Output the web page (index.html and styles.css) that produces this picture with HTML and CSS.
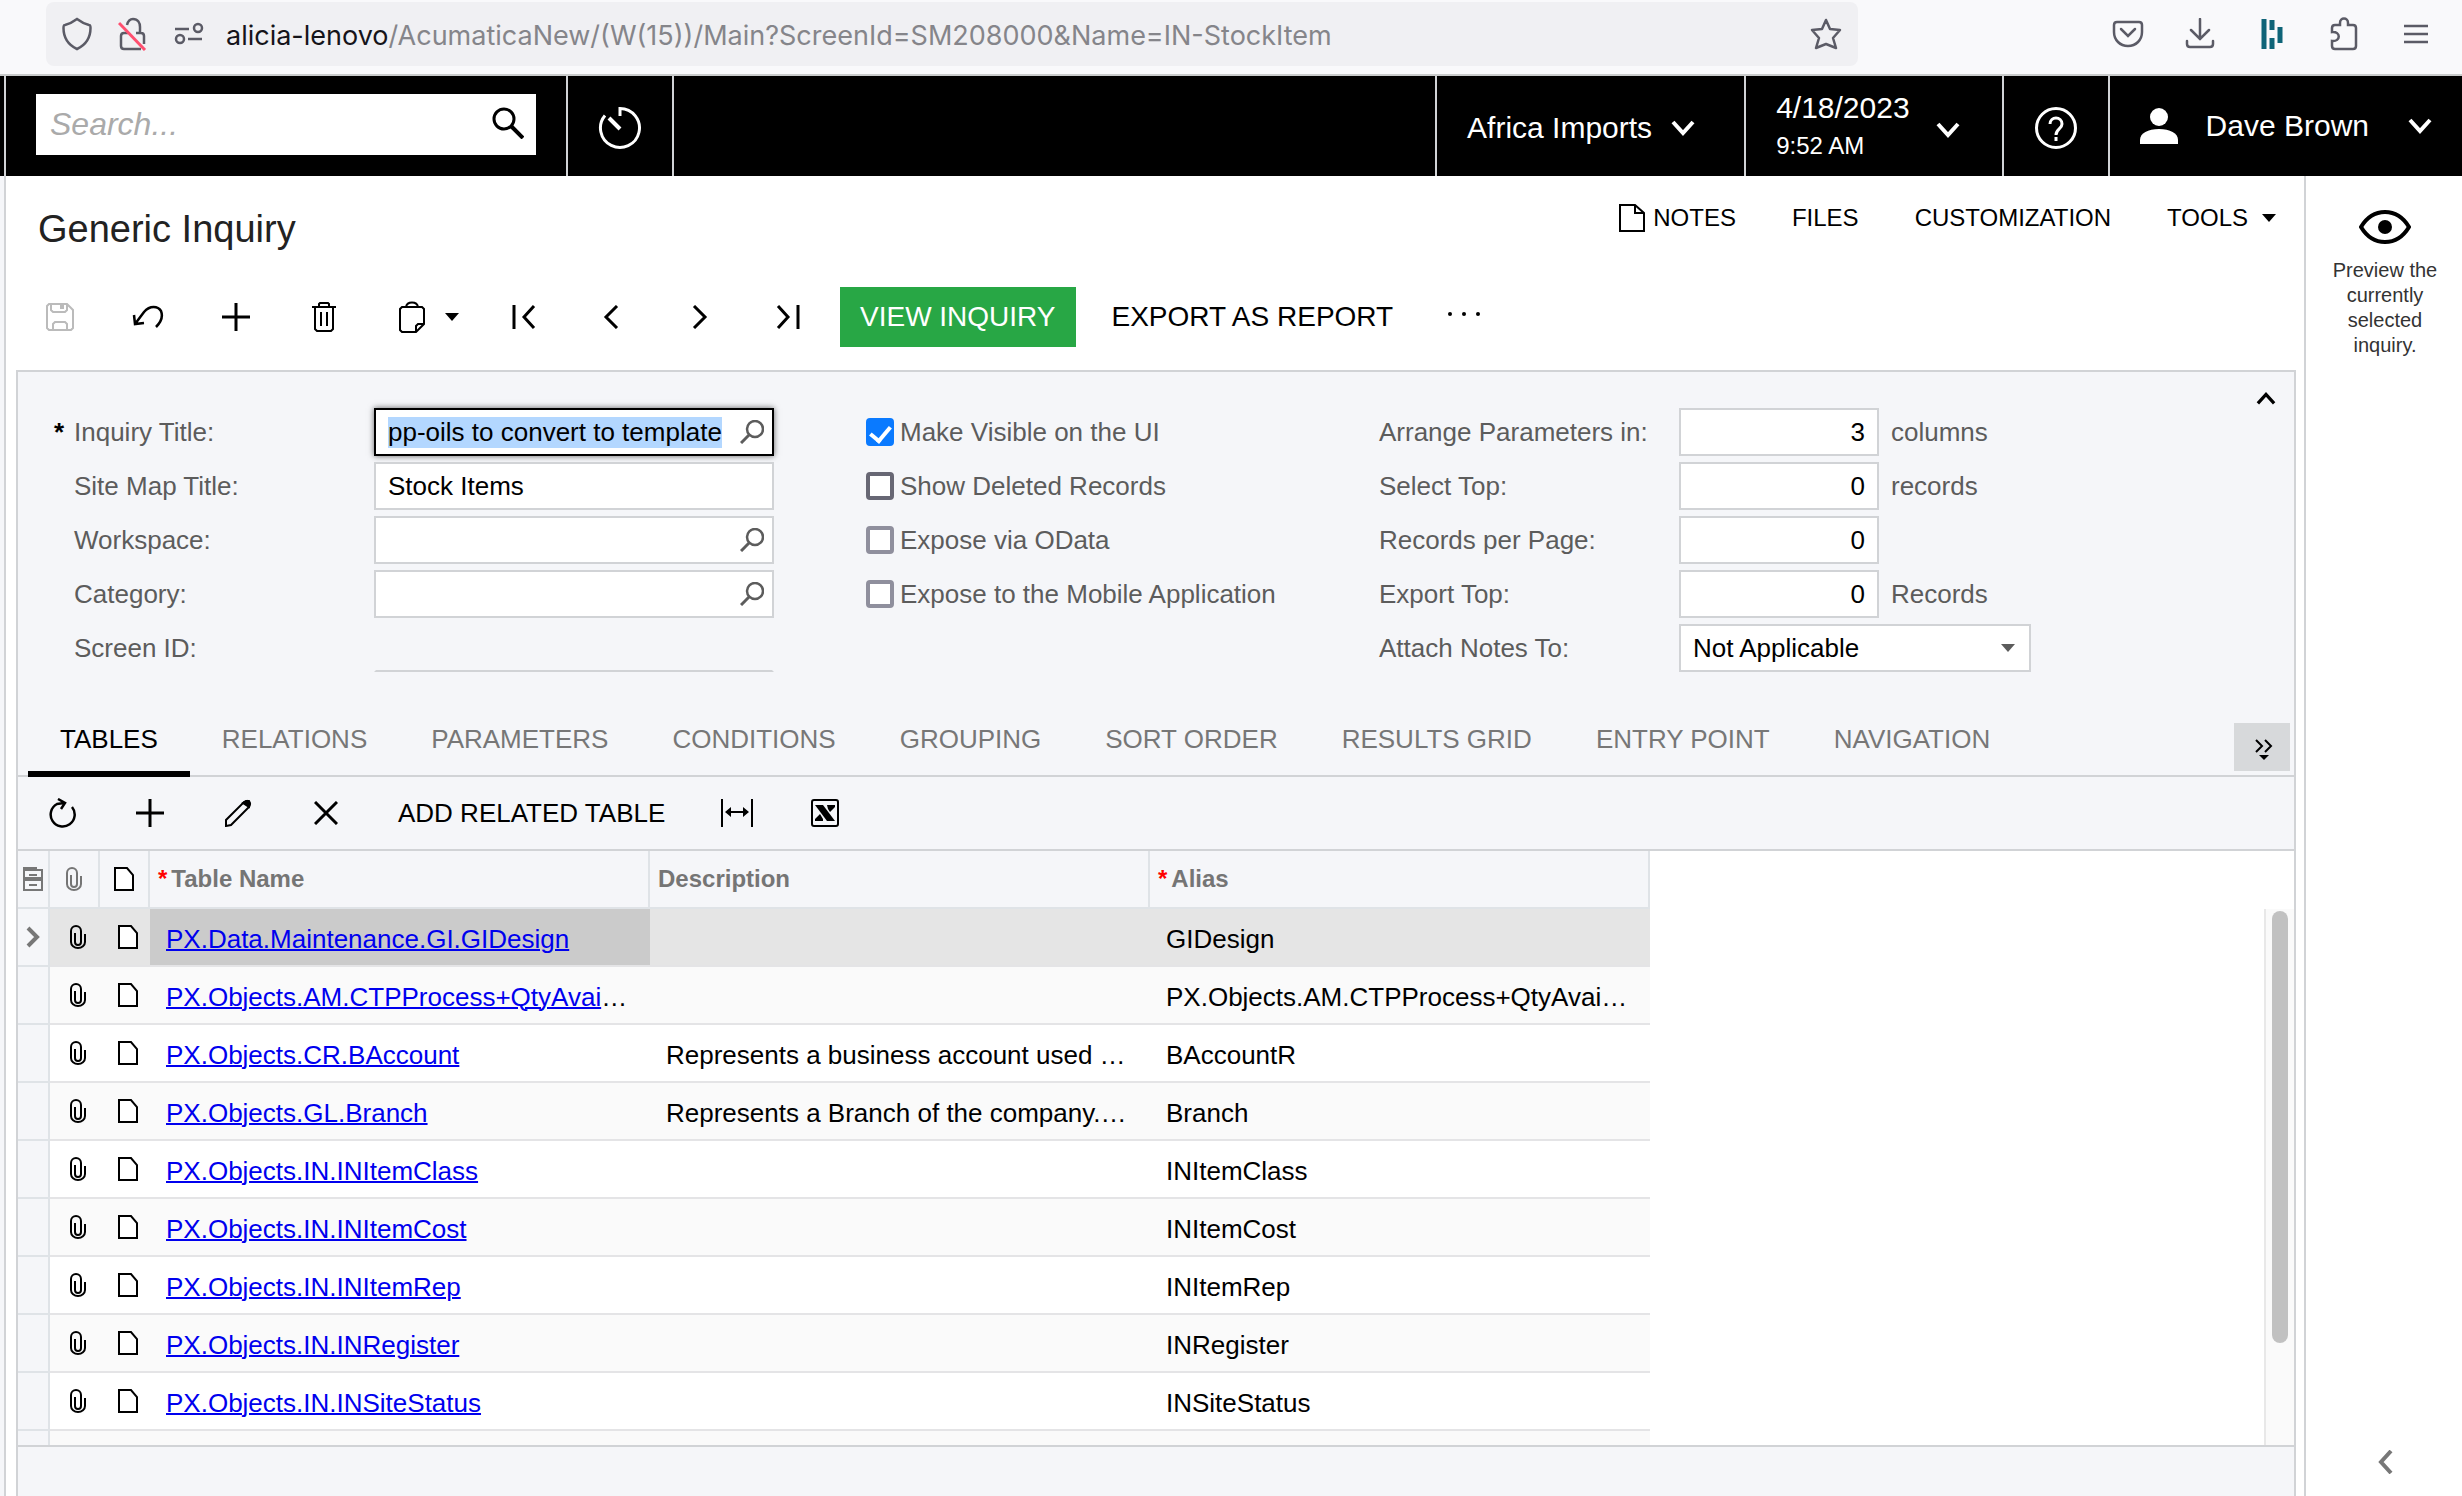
FILE: index.html
```html
<!DOCTYPE html>
<html lang="en">
  <head>
    <meta charset="UTF-8" />
    <meta name="viewport" content="width=device-width, initial-scale=1.0" />
    <title>Generic Inquiry</title>
    <link rel="stylesheet" href="styles.css">
  </head>
  <body>
    <!-- shared icons -->
    <svg class="defs" width="0" height="0">
      <symbol id="chevron" viewBox="0 0 24 16"><path d="M2 2l10 11L22 2" fill="none" stroke="currentColor" stroke-width="4" /></symbol>
      <symbol id="chevron-up" viewBox="0 0 24 16"><path d="M2 14L12 3l10 11" fill="none" stroke="currentColor" stroke-width="4" /></symbol>
      <symbol id="caret" viewBox="0 0 14 8"><path d="M0 0h14L7 8z" fill="currentColor" /></symbol>
      <symbol id="plus" viewBox="0 0 28 28"><path d="M14 0v28M0 14h28" stroke="currentColor" stroke-width="3" /></symbol>
      <symbol id="lookup" viewBox="0 0 24 24"><circle cx="15" cy="9" r="8" fill="none" stroke="currentColor" stroke-width="2.500" /><path d="M9 15l-8 8" stroke="currentColor" stroke-width="3" /></symbol>
      <symbol id="clip" viewBox="0 0 18 24"><path d="M6 8v9a3 3 0 0 0 6 0V6a5 5 0 0 0-10 0v11a7 6 0 0 0 14 0V9" fill="none" stroke="currentColor" stroke-width="2" /></symbol>
      <symbol id="page" viewBox="0 0 20 24"><path d="M1 1h12l6 7v15H1z" fill="#fff" stroke="currentColor" stroke-width="2" /></symbol>
    </svg>

    <div class="browser">
      <div class="urlbar">
        <svg width="30" height="34" viewBox="0 0 30 34" fill="none" stroke="#5b5b66" stroke-width="2.500"><path d="M15 2c4 3 8 5 12 6 1.500 0 1.500 1 1.500 3 0 10-5 17-13.500 21C6.500 28 1.500 21 1.500 11c0-2 0-3 1.500-3 4-1 8-3 12-6z" /></svg>
        <svg width="30" height="34" viewBox="0 0 30 34" fill="none" stroke="#5b5b66" stroke-width="2.500"><path d="M9 8c1-4 3-6 6-6 5 0 7 4 7 8v6M10 16H6c-2 0-3 1-3 3v10c0 2 1 3 3 3h17M18 16h5c2 0 3 1 3 3v8" /><path d="M1 6l26 27" stroke="#ff4f6f" stroke-width="3" /></svg>
        <svg width="30" height="34" viewBox="0 0 30 34" fill="none" stroke="#5b5b66" stroke-width="2.500"><path d="M1 12h14M14 22h14" /><circle cx="24" cy="11" r="4" /><circle cx="6" cy="22" r="4" /></svg>
        <div class="url"><span class="host">alicia-lenovo</span>/AcumaticaNew/(W(15))/Main?ScreenId=SM208000&amp;Name=IN-StockItem</div>
        <svg width="32" height="32" viewBox="0 0 32 32" fill="none" stroke="#5b5b66" stroke-width="2.500" stroke-linejoin="round"><path d="M16 2l4 9 10 1-7 8 3 10-10-4-10 4 3-10-7-8 10-1z" /></svg>
      </div>
      <div class="browser-tools">
        <svg width="32" height="32" viewBox="0 0 32 32" fill="none" stroke="#5b5b66" stroke-width="2.500" stroke-linecap="round"><path d="M5 4h22c2 0 3 1 3 3v7c0 8-6 14-14 14S2 22 2 14V7c0-2 1-3 3-3z" /><path d="M9 11l7 7 7-7" /></svg>
        <svg width="32" height="32" viewBox="0 0 32 32" fill="none" stroke="#5b5b66" stroke-width="2.500" stroke-linecap="round"><path d="M16 1v20M7 12l9 9 9-9M3 23v3c0 2 1 3 3 3h20c2 0 3-1 3-3v-3" /></svg>
        <svg width="32" height="32" viewBox="0 0 32 32" fill="none" stroke="#0f6478" stroke-width="5"><path d="M8 1v30M16 2v10M16 20v11M24 9v16" /></svg>
        <svg width="32" height="34" viewBox="0 0 32 34" fill="none" stroke="#5b5b66" stroke-width="2.500"><path d="M4 15v-4c0-2 1-3 3-3h5V6c0-6 8-6 8 0v2h5c2 0 3 1 3 3v18c0 2-1 3-3 3H7c-2 0-3-1-3-3v-5c9 1 9-10 0-9z" /></svg>
        <svg width="32" height="32" viewBox="0 0 32 32" stroke="#5b5b66" stroke-width="2.500"><path d="M4 8h24M4 16h24M4 24h24" /></svg>
      </div>
    </div>

    <header class="topbar">
      <div class="search-cell">
        <label class="search">
          <input type="text" placeholder="Search..." aria-label="Search">
          <svg width="32" height="32" viewBox="0 0 32 32" fill="none" stroke="#000"><circle cx="12" cy="12" r="10" stroke-width="3" /><path d="M19 19l12 12" stroke-width="4" /></svg>
        </label>
      </div>
      <button class="icon-cell recent" aria-label="Recent">
        <svg width="44" height="44" viewBox="0 0 44 44" fill="none" stroke="#fff" stroke-width="3"><path d="M22 10V2.500A19.500 19.500 0 1 1 7 9.500" /><path d="M11 12l11 11" stroke-width="4" /></svg>
      </button>
      <button class="cell company">Africa Imports <svg width="24" height="16"><use href="#chevron" /></svg></button>
      <button class="cell date"><span>4/18/2023<small>9:52 AM</small></span> <svg width="24" height="16"><use href="#chevron" /></svg></button>
      <button class="icon-cell help" aria-label="Help">
        <svg width="44" height="44" viewBox="0 0 44 44" fill="none" stroke="#fff" stroke-width="3"><circle cx="22" cy="22" r="19.500" /><path d="M16 18c0-8 12-8 12 0 0 5-6 5-6 11M22 31v4" /></svg>
      </button>
      <button class="cell user">
        <svg width="38" height="36" viewBox="0 0 38 36" fill="#fff"><ellipse cx="19" cy="9" rx="9" ry="9" /><path d="M0 36v-4c0-7 8-11 19-11s19 4 19 11v4z" /></svg>
        <span>Dave Brown</span>
        <svg width="24" height="16"><use href="#chevron" /></svg>
      </button>
    </header>

    <div class="page">
      <main class="content">
        <div class="heading">
          <h1>Generic Inquiry</h1>
          <div class="links">
            <button class="notes"><svg width="26" height="28" viewBox="0 0 26 28" fill="none" stroke="#000" stroke-width="2"><path d="M1 1h15l9 8v18H1zM16 1v8h9" /></svg>NOTES</button>
            <button>FILES</button>
            <button>CUSTOMIZATION</button>
            <button class="tools">TOOLS <svg width="14" height="8"><use href="#caret" /></svg></button>
          </div>
        </div>

        <div class="toolbar">
          <button class="tool" disabled aria-label="Save"><svg width="28" height="28" viewBox="0 0 28 28" fill="none" stroke="#bbb" stroke-width="2"><path d="M3 1h18l6 6v18l-2 2H3l-2-2V3zM5 1v6l2 2h12l2-2V1M7 27v-6l2-2h10l2 2v6" /><path d="M16 2v4" stroke-width="4" /></svg></button>
          <button class="tool" aria-label="Undo"><svg width="32" height="24" viewBox="0 0 32 24" fill="none" stroke="#000" stroke-width="2.500"><path d="M2 10l1 9 9-1M3 19L12 7c6-7 14-6 17-1 2 5 0 11-5 16" /></svg></button>
          <button class="tool" aria-label="Add"><svg width="28" height="28"><use href="#plus" /></svg></button>
          <button class="tool" aria-label="Delete"><svg width="24" height="30" viewBox="0 0 24 30" fill="none" stroke="#000" stroke-width="2"><path d="M0 5h24M7 5V2l1-1h8l1 1v3M3 5v22l2 2h14l2-2V5M9 10v14M15 10v14" /></svg></button>
          <button class="tool paste" aria-label="Clipboard"><svg width="26" height="32" viewBox="0 0 26 32" fill="none" stroke="#000" stroke-width="2"><path d="M3 6h20l2 2v15l-8 8H3l-2-2V8zM7 6c1-6 11-6 12 0M17 31v-6l2-2h6" /></svg><svg width="14" height="8"><use href="#caret" /></svg></button>
          <button class="tool" aria-label="First"><svg width="24" height="24" viewBox="0 0 24 24" fill="none" stroke="#000" stroke-width="3"><path d="M2 0v24M22 1L12 12l10 11" /></svg></button>
          <button class="tool" aria-label="Previous"><svg width="24" height="24" viewBox="0 0 24 24" fill="none" stroke="#000" stroke-width="3"><path d="M17 1L6 12l11 11" /></svg></button>
          <button class="tool" aria-label="Next"><svg width="24" height="24" viewBox="0 0 24 24" fill="none" stroke="#000" stroke-width="3"><path d="M6 1l11 11L6 23" /></svg></button>
          <button class="tool" aria-label="Last"><svg width="24" height="24" viewBox="0 0 24 24" fill="none" stroke="#000" stroke-width="3"><path d="M22 0v24M2 1l10 11L2 23" /></svg></button>
          <button class="view">VIEW INQUIRY</button>
          <button class="export">EXPORT AS REPORT</button>
          <button class="more" aria-label="More"><svg width="34" height="6" viewBox="0 0 34 6"><circle cx="3" cy="3" r="2" /><circle cx="17" cy="3" r="2" /><circle cx="31" cy="3" r="2" /></svg></button>
        </div>

        <section class="panel">
          <form class="form">
            <div class="col">
              <div class="row required"><label for="title">Inquiry Title:</label>
                <span class="field"><input id="title" type="text" value="pp-oils to convert to template"><svg width="24" height="24"><use href="#lookup" /></svg></span></div>
              <div class="row"><label for="sitemap">Site Map Title:</label>
                <span class="field"><input id="sitemap" type="text" value="Stock Items"></span></div>
              <div class="row"><label for="workspace">Workspace:</label>
                <span class="field"><input id="workspace" type="text"><svg width="24" height="24"><use href="#lookup" /></svg></span></div>
              <div class="row"><label for="category">Category:</label>
                <span class="field"><input id="category" type="text"><svg width="24" height="24"><use href="#lookup" /></svg></span></div>
              <div class="row"><label for="screen">Screen ID:</label>
                <span class="field"><input id="screen" class="readonly" type="text" readonly></span></div>
            </div>
            <div class="col">
              <label class="check"><input type="checkbox" checked>Make Visible on the UI</label>
              <label class="check dark"><input type="checkbox">Show Deleted Records</label>
              <label class="check"><input type="checkbox">Expose via OData</label>
              <label class="check"><input type="checkbox">Expose to the Mobile Application</label>
            </div>
            <div class="col">
              <div class="row"><label for="columns">Arrange Parameters in:</label><input id="columns" class="num" type="text" value="3"><span class="unit">columns</span></div>
              <div class="row"><label for="top">Select Top:</label><input id="top" class="num" type="text" value="0"><span class="unit">records</span></div>
              <div class="row"><label for="perpage">Records per Page:</label><input id="perpage" class="num" type="text" value="0"></div>
              <div class="row"><label for="exporttop">Export Top:</label><input id="exporttop" class="num" type="text" value="0"><span class="unit">Records</span></div>
              <div class="row"><label for="notes">Attach Notes To:</label>
                <span class="field select"><select id="notes"><option>Not Applicable</option></select><svg width="14" height="8"><use href="#caret" /></svg></span></div>
            </div>
            <button class="collapse" type="button" aria-label="Collapse"><svg width="20" height="13"><use href="#chevron-up" /></svg></button>
          </form>

          <nav class="tabs">
            <button class="tab active">TABLES</button>
            <button class="tab">RELATIONS</button>
            <button class="tab">PARAMETERS</button>
            <button class="tab">CONDITIONS</button>
            <button class="tab">GROUPING</button>
            <button class="tab">SORT ORDER</button>
            <button class="tab">RESULTS GRID</button>
            <button class="tab">ENTRY POINT</button>
            <button class="tab">NAVIGATION</button>
            <button class="overflow" aria-label="More tabs"><svg width="18" height="22" viewBox="0 0 18 22" fill="none" stroke="#000" stroke-width="2"><path d="M1 1l6 6-6 6M10 1l6 6-6 6" /><path d="M4 16h10l-5 5z" fill="#000" stroke="none" /></svg></button>
          </nav>

          <div class="toolbar grid-tools">
            <button class="tool" aria-label="Refresh"><svg width="28" height="30" viewBox="0 0 28 30" fill="none" stroke="#000" stroke-width="2.500"><path d="M24 9A12 12 0 1 1 9 6l7-1M10 1l7 4-4 6" /></svg></button>
            <button class="tool" aria-label="Add row"><svg width="28" height="28"><use href="#plus" /></svg></button>
            <button class="tool" aria-label="Edit"><svg width="28" height="28" viewBox="0 0 28 28" fill="none" stroke="#000" stroke-width="2"><path d="M2 27v-6L20 3l3-1 3 3-1 3L7 26z" /><path d="M19 4l3-2h3l1 2-1 4z" fill="#000" /></svg></button>
            <button class="tool" aria-label="Delete row"><svg width="24" height="24" viewBox="0 0 24 24" stroke="#000" stroke-width="3"><path d="M1 1l22 22M23 1L1 23" /></svg></button>
            <button class="related">ADD RELATED TABLE</button>
            <button class="tool" aria-label="Fit to screen"><svg width="32" height="28" viewBox="0 0 32 28" fill="none" stroke="#000" stroke-width="2"><path d="M1 0v28M31 0v28M6 13h20" /><path d="M4 13l6-5v10zM28 13l-6-5v10z" fill="#000" stroke="none" /></svg></button>
            <button class="tool" aria-label="Export to Excel"><svg width="28" height="28" viewBox="0 0 28 28"><rect x="1" y="1" width="26" height="26" rx="2" fill="none" stroke="#000" stroke-width="2" /><path d="M4 6h8l12 16h-8zM16 6h8v2l-5 5-2-3zM4 22v-2l5-5 3 5v2z" /></svg></button>
          </div>

          <div class="grid">
            <div class="grid-scroll">
              <table>
                <colgroup><col class="c-mark"><col class="c-icon"><col class="c-icon"><col class="c-text"><col class="c-text"><col class="c-text"></colgroup>
                <thead>
                  <tr>
                    <th><svg width="20" height="24" viewBox="0 0 20 24" fill="none" stroke="#777" stroke-width="2"><path d="M1 3h18v20H1zM6 8h8M6 18h8" /><path d="M0 2h14M1 12h18" stroke-width="4" /></svg></th>
                    <th><svg width="18" height="24"><use href="#clip" /></svg></th>
                    <th class="dark"><svg width="20" height="24"><use href="#page" /></svg></th>
                    <th class="text"><span class="star">*</span>Table Name</th>
                    <th class="text">Description</th>
                    <th class="text"><span class="star">*</span>Alias</th>
                  </tr>
                </thead>
                <tbody id="rows"></tbody>
              </table>
            </div>
            <div class="scrollbar"><div class="thumb"></div></div>
          </div>
          <div class="grid-footer"></div>
        </section>
      </main>

      <aside class="side">
        <button class="preview">
          <svg width="52" height="34" viewBox="0 0 52 34"><path d="M2 17C14-3 38-3 50 17 38 37 14 37 2 17z" fill="none" stroke="#000" stroke-width="4" /><circle cx="26" cy="17" r="7" /></svg>
          Preview the currently selected inquiry.
        </button>
        <button class="expand" aria-label="Expand"><svg width="16" height="24" viewBox="0 0 16 24" fill="none" stroke="#777" stroke-width="4"><path d="M14 1L4 12l10 11" /></svg></button>
      </aside>
    </div>

    <script>
      // name, rest shown after the link, description, alias
      const tables = [
        ["PX.Data.Maintenance.GI.GIDesign", "", "", "GIDesign"],
        ["PX.Objects.AM.CTPProcess+QtyAvai", "…", "", "PX.Objects.AM.CTPProcess+QtyAvai…"],
        ["PX.Objects.CR.BAccount", "", "Represents a business account used …", "BAccountR"],
        ["PX.Objects.GL.Branch", "", "Represents a Branch of the company.…", "Branch"],
        ["PX.Objects.IN.INItemClass", "", "", "INItemClass"],
        ["PX.Objects.IN.INItemCost", "", "", "INItemCost"],
        ["PX.Objects.IN.INItemRep", "", "", "INItemRep"],
        ["PX.Objects.IN.INRegister", "", "", "INRegister"],
        ["PX.Objects.IN.INSiteStatus", "", "", "INSiteStatus"],
      ];
      const arrow = '<svg width="14" height="22" viewBox="0 0 14 22" fill="none" stroke="#777" stroke-width="4"><path d="M2 2l9 9-9 9" /></svg>';
      const rows = tables.map(([name, rest, description, alias], i) => `
        <tr class="${i === 0 ? "selected" : ""}">
          <td class="mark">${i === 0 ? arrow : ""}</td>
          <td class="icon"><svg width="18" height="24"><use href="#clip" /></svg></td>
          <td class="icon"><svg width="20" height="24"><use href="#page" /></svg></td>
          <td class="name"><a href="#">${name}</a>${rest}</td>
          <td>${description}</td>
          <td>${alias}</td>
        </tr>`);
      // the next row is only partly scrolled into view
      rows.push('<tr><td class="mark"></td><td></td><td></td><td></td><td></td><td></td></tr>');
      document.getElementById("rows").innerHTML = rows.join("");

      const title = document.getElementById("title");
      title.focus();
      title.select();
    </script>
  </body>
</html>
```

FILE: styles.css
```css
* {
  box-sizing: border-box;
}
:root {
  --line: #d1d3d6;
  --panel: #f5f6f9;
}
body {
  margin: 0;
  height: 100vh;
  display: flex;
  flex-direction: column;
  overflow: hidden;
  font-family: "Liberation Sans", Arial, sans-serif;
  font-size: 26px;
  color: #000;
  background-color: #fff;
}
button,
input,
select {
  font: inherit;
  color: inherit;
}
button {
  border: none;
  padding: 0;
  background: none;
  cursor: pointer;
}
svg {
  display: block;
  flex: none;
}
.defs {
  position: absolute;
}

/* browser bar */
.browser {
  flex: none;
  height: 76px;
  padding: 2px 30px 0 46px;
  display: flex;
  align-items: flex-start;
  justify-content: space-between;
  background-color: #f9f9fb;
  border-bottom: 2px solid #c9cbcb;
}
.urlbar {
  width: 1812px;
  height: 64px;
  padding: 0 16px;
  display: flex;
  align-items: center;
  gap: 26px;
  border-radius: 8px;
  background-color: #f0f0f3;
}
.url {
  flex: 1;
  margin-left: -4px;
  padding-top: 2px;
  font-family: Inter, sans-serif;
  font-size: 27px;
  color: #85858a;
}
.host {
  color: #15141a;
}
.browser-tools {
  height: 64px;
  display: flex;
  align-items: center;
  gap: 40px;
}

/* black top bar */
.topbar {
  flex: none;
  height: 100px;
  padding-left: 4px;
  display: flex;
  font-size: 30px;
  color: #fff;
  background-color: #000;
}
.search-cell {
  padding: 18px 30px 0;
  border-left: 2px solid var(--line);
  border-right: 2px solid var(--line);
}
.search {
  width: 500px;
  height: 61px;
  padding: 0 12px 0 14px;
  display: flex;
  align-items: center;
  background-color: #fff;
}
.search input {
  flex: 1;
  min-width: 0;
  border: none;
  padding: 0;
  outline: none;
  font-size: 32px;
  color: #000;
}
.search input::placeholder {
  font-style: italic;
  color: #aaa;
}
.search svg {
  margin-bottom: 4px;
}
.icon-cell {
  width: 106px;
  padding-top: 4px;
  display: flex;
  align-items: center;
  justify-content: center;
}
.recent {
  margin-right: auto;
  border-right: 2px solid var(--line);
}
.cell,
.help {
  border-left: 2px solid var(--line);
}
.cell {
  padding: 0 30px;
  display: flex;
  align-items: center;
  text-align: left;
}
.company {
  gap: 19px;
  padding: 4px 49px 0 30px;
}
.date {
  gap: 26px;
  padding: 0 42px 2px 30px;
}
.date span {
  line-height: 42px;
}
.date small {
  display: block;
  font-size: 24px;
  line-height: 34px;
}
.date svg {
  margin-top: 10px;
}
.user span {
  margin: 0 39px 0 28px;
}

.page {
  flex: 1;
  min-height: 0;
  display: flex;
  border-left: 4px solid var(--panel);
}
.content {
  flex: 1;
  min-width: 0;
  padding: 0 8px 0 10px;
  display: flex;
  flex-direction: column;
  border-left: 2px solid var(--line);
}
.heading {
  height: 96px;
  padding: 0 20px 0 22px;
  display: flex;
  justify-content: space-between;
}
h1 {
  margin: 31px 0 0;
  font-size: 38px;
  font-weight: normal;
  line-height: 44px;
  color: #222;
}
.links {
  height: 28px;
  margin-top: 28px;
  display: flex;
  gap: 56px;
  font-size: 24px;
  line-height: 28px;
}
.notes,
.tools {
  display: flex;
  align-items: center;
}
.notes {
  gap: 8px;
}
.tools {
  gap: 14px;
}

/* toolbars */
.toolbar {
  height: 90px;
  margin-bottom: 8px;
  display: flex;
  align-items: center;
}
.tool {
  width: 88px;
  height: 60px;
  display: flex;
  align-items: center;
  justify-content: center;
}
.paste {
  width: 112px;
  padding-left: 10px;
  gap: 20px;
}
.view,
.export {
  font-size: 28px;
  height: 60px;
}
.view {
  margin-left: 8px;
  padding: 0 20px;
  color: #fff;
  background-color: #28a745;
}
.export {
  padding: 0 36px;
}
.more {
  padding: 0 18px 6px;
}

/* form */
.panel {
  flex: 1;
  min-height: 0;
  display: flex;
  flex-direction: column;
  border: 2px solid var(--line);
  border-bottom: none;
  background-color: var(--panel);
}
.form {
  position: relative;
  padding: 36px 56px 35px;
  display: grid;
  grid-template-columns: 700px 421px 1fr;
  gap: 92px;
  color: #5c5c5c;
}
.col {
  display: flex;
  flex-direction: column;
  gap: 6px;
}
.row,
.check {
  height: 48px;
  display: flex;
  align-items: center;
}
.row label {
  width: 300px;
}
.required label::before {
  content: "*";
  display: inline-block;
  width: 20px;
  margin-left: -20px;
  font-weight: bold;
  color: #000;
}
.field {
  width: 400px;
  display: flex;
  align-items: center;
}
.field input,
.field select,
.num {
  width: 100%;
  height: 48px;
  padding: 0 12px;
  border: 2px solid var(--line);
  border-radius: 0;
  outline: none;
  line-height: 30px;
  color: #000;
  background-color: #fff;
}
.field input:focus {
  border-color: #000;
  box-shadow: 0 0 6px rgba(0, 0, 0, 0.6);
}
.field input::selection {
  color: #000;
  background-color: #b3d7ff;
}
.field svg {
  margin-left: -34px;
  margin-right: 10px;
}
.field .readonly {
  border-color: transparent transparent var(--line);
  background-color: transparent;
}
.row .num {
  width: 200px;
  text-align: right;
}
.unit {
  margin-left: 12px;
}
.select {
  width: 352px;
}
.select select {
  appearance: none;
}
.select svg {
  margin-left: -30px;
  margin-right: 16px;
  pointer-events: none;
}
.check {
  gap: 6px;
}
.check input {
  appearance: none;
  width: 28px;
  height: 28px;
  margin: 0;
  border: 4px solid #8f8f9d;
  border-radius: 4px;
  background-color: #fff;
}
.check.dark input {
  border-color: #676774;
}
.check input:checked {
  border-color: #0a7aff;
  background-color: #0a7aff;
}
.check input:checked::before {
  content: "";
  display: block;
  width: 9px;
  height: 16px;
  margin: 0 auto;
  border-right: 4px solid #fff;
  border-bottom: 4px solid #fff;
  transform: rotate(40deg);
}
.collapse {
  position: absolute;
  top: 20px;
  right: 18px;
  color: #000;
}

/* tabs */
.tabs {
  height: 70px;
  padding: 0 4px 0 10px;
  display: flex;
  box-shadow: inset 0 -2px var(--line);
}
.tab {
  padding: 0 32px;
  border-bottom: 6px solid transparent;
  color: #777;
}
.tab.active {
  color: #000;
  border-color: #000;
}
.overflow {
  width: 56px;
  height: 48px;
  margin: 16px 0 0 auto;
  padding: 6px 0 0 4px;
  display: flex;
  align-items: center;
  justify-content: center;
  background-color: #d7d9db;
}

/* grid */
.grid-tools {
  height: 72px;
  margin: 0;
}
.related {
  padding: 0 28px;
}
.grid {
  flex: 1;
  min-height: 0;
  display: flex;
  border-top: 2px solid var(--line);
  background-color: #fff;
}
.grid-scroll {
  flex: 1;
  overflow: hidden;
}
table {
  width: 1632px;
  table-layout: fixed;
  border-collapse: separate;
  border-spacing: 0;
}
.c-mark {
  width: 32px;
}
.c-icon {
  width: 50px;
}
.c-text {
  width: 500px;
}
th,
td {
  height: 58px;
  padding: 4px 0 0 16px;
  border-bottom: 2px solid #e4e4e6;
  text-align: left;
  white-space: nowrap;
}
th {
  padding: 0;
  border-right: 2px solid #dfe3e7;
  border-bottom-color: #dfe3e7;
  font-size: 24px;
  color: #757575;
  background-color: var(--panel);
}
th svg,
.mark svg,
.icon svg {
  margin: 0 auto;
}
th.dark {
  color: #000;
}
th.text {
  padding-left: 8px;
}
.star {
  margin-right: 4px;
  color: #f00;
}
tbody tr:nth-child(even) {
  background-color: #fafafa;
}
.mark {
  padding: 0;
  border-right: 2px solid #dfe3e7;
  border-bottom-color: #dfe3e7;
  background-color: var(--panel);
}
.icon {
  padding: 0 0 0 6px;
}
td a {
  color: #00e;
  text-decoration-thickness: 2px;
}
.selected {
  background-color: #e5e5e5;
}
.selected .name {
  background-color: #cbcbcb;
}
.scrollbar {
  width: 30px;
  margin-top: 58px;
  padding-top: 2px;
  border-left: 2px solid #e8e8e8;
  background-color: #fafafa;
}
.thumb {
  width: 16px;
  height: 432px;
  margin-left: 6px;
  border-radius: 8px;
  background-color: #c1c1c1;
}
.grid-footer {
  flex: none;
  height: 51px;
  border-top: 2px solid var(--line);
}

/* right side panel */
.side {
  width: 158px;
  padding: 34px 20px 22px 22px;
  display: flex;
  flex-direction: column;
  align-items: center;
  justify-content: space-between;
  border-left: 2px solid var(--line);
}
.preview {
  font-size: 20px;
  line-height: 25px;
  color: #333;
}
.preview svg {
  margin: 0 auto 14px;
}
```
